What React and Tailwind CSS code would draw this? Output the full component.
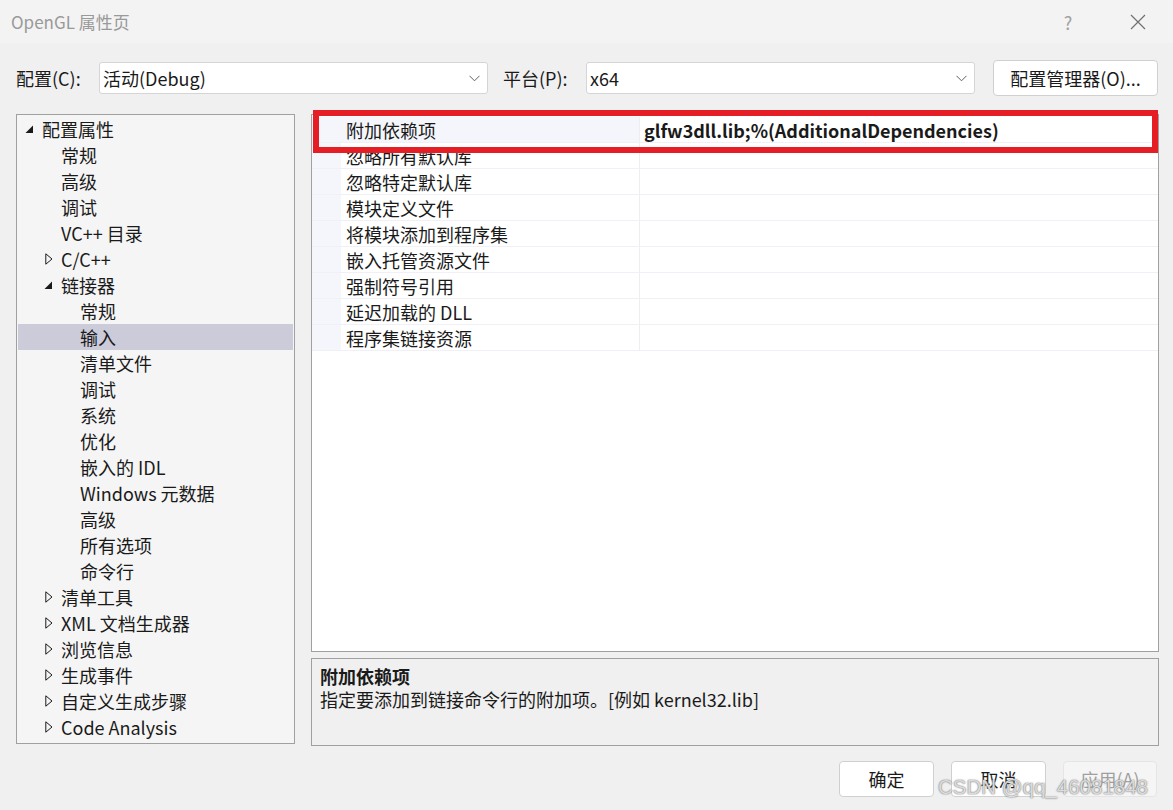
import React from "react";

const tree = [
  { label: "配置属性", level: 0, icon: "open" },
  { label: "常规", level: 1 },
  { label: "高级", level: 1 },
  { label: "调试", level: 1 },
  { label: "VC++ 目录", level: 1 },
  { label: "C/C++", level: 1, icon: "closed" },
  { label: "链接器", level: 1, icon: "open" },
  { label: "常规", level: 2 },
  { label: "输入", level: 2, selected: true },
  { label: "清单文件", level: 2 },
  { label: "调试", level: 2 },
  { label: "系统", level: 2 },
  { label: "优化", level: 2 },
  { label: "嵌入的 IDL", level: 2 },
  { label: "Windows 元数据", level: 2 },
  { label: "高级", level: 2 },
  { label: "所有选项", level: 2 },
  { label: "命令行", level: 2 },
  { label: "清单工具", level: 1, icon: "closed" },
  { label: "XML 文档生成器", level: 1, icon: "closed" },
  { label: "浏览信息", level: 1, icon: "closed" },
  { label: "生成事件", level: 1, icon: "closed" },
  { label: "自定义生成步骤", level: 1, icon: "closed" },
  { label: "Code Analysis", level: 1, icon: "closed" },
];

const props = [
  { name: "附加依赖项", value: "glfw3dll.lib;%(AdditionalDependencies)" },
  { name: "忽略所有默认库" },
  { name: "忽略特定默认库" },
  { name: "模块定义文件" },
  { name: "将模块添加到程序集" },
  { name: "嵌入托管资源文件" },
  { name: "强制符号引用" },
  { name: "延迟加载的 DLL" },
  { name: "程序集链接资源" },
];

const Chevron = () => (
  <svg width="11" height="7" viewBox="0 0 11 7" className="shrink-0">
    <polyline points="0.5,0.8 5.5,5.8 10.5,0.8" fill="none" stroke="#606060" strokeWidth="1" />
  </svg>
);

const TreeIcon = ({ type }) => {
  if (type === "open")
    return (
      <svg width="9" height="9" viewBox="0 0 9 9">
        <polygon points="8,0.5 8,8 0.5,8" fill="#1a1a1a" />
      </svg>
    );
  if (type === "closed")
    return (
      <svg width="8" height="12" viewBox="0 0 8 12">
        <polygon points="0.8,0.8 7,6 0.8,11.2" fill="none" stroke="#1a1a1a" strokeWidth="1" />
      </svg>
    );
  return null;
};

const Select = ({ value, width }) => (
  <div
    className={`${width} h-[32px] bg-white border border-[#d5d5d5] rounded-[3px] flex items-center justify-between pl-[3px] pr-[7px]`}
  >
    <span>{value}</span>
    <Chevron />
  </div>
);

export default function App() {
  return (
    <div className="w-[1173px] h-[810px] bg-[#f0f0f0] relative overflow-hidden text-[18px] text-[#1a1a1a] font-['Noto_Sans_CJK_SC',sans-serif] leading-none">
      {/* title bar */}
      <div className="h-[43px] bg-[#f3f3f3] flex items-center justify-between pl-[11px]">
        <span className="text-[17px] text-[#999999]">OpenGL 属性页</span>
        <div className="flex items-center h-full">
          <span className="text-[18px] text-[#a0a0a0] w-[70px] text-center">?</span>
          <div className="w-[70px] flex justify-center">
            <svg width="16" height="16" viewBox="0 0 16 16">
              <path d="M1 1 L15 15 M15 1 L1 15" stroke="#707070" strokeWidth="1.2" />
            </svg>
          </div>
        </div>
      </div>

      {/* config row */}
      <div className="flex items-center mt-[17px] pl-[16px] h-[36px]">
        <span className="w-[83px]">配置(C):</span>
        <Select value="活动(Debug)" width="w-[389px]" />
        <span className="ml-[15px] w-[83px]">平台(P):</span>
        <Select value="x64" width="w-[389px]" />
        <div className="ml-[18px] w-[165px] h-[36px] bg-white border border-[#d0d0d0] rounded-[4px] flex items-center justify-center">
          配置管理器(O)...
        </div>
      </div>

      {/* main area */}
      <div className="flex mt-[18px] pl-[16px] gap-[16px]">
        {/* tree */}
        <div className="w-[279px] h-[630px] border border-[#a0a0a0] bg-[#f5f5f5] pt-[1px] px-[1px]">
          {tree.map((t, i) => (
            <div
              key={i}
              className={`h-[26px] flex items-center ${t.selected ? "bg-[#cbcbd9]" : ""}`}
            >
              <div
                className="flex items-center justify-end shrink-0 w-[10px]"
                style={{ marginLeft: 6 + t.level * 19 }}
              >
                <TreeIcon type={t.icon} />
              </div>
              <span className="ml-[8px] whitespace-nowrap">{t.label}</span>
            </div>
          ))}
        </div>

        {/* right column */}
        <div className="w-[848px] flex flex-col gap-[6px]">
          <div className="h-[538px] border border-[#a0a0a0] bg-white pt-[2px]">
            {props.map((p, i) => (
              <div key={i} className="h-[26px] flex border-b border-[#f0f0f6]">
                <div className="w-[29px] bg-[#f4f6fb] shrink-0" />
                <div
                  className={`w-[299px] shrink-0 flex items-center pl-[5px] border-r border-[#eeeeee] ${i === 0 ? "bg-[#f4f6fb]" : ""}`}
                >
                  {p.name}
                </div>
                <div className="flex-1 flex items-center pl-[4px] font-bold">{p.value}</div>
              </div>
            ))}
          </div>
          <div className="h-[88px] border border-[#a0a0a0] bg-[#f0f0f0] pl-[8px] pt-[6px]">
            <div className="font-bold h-[22px] flex items-center">附加依赖项</div>
            <div className="h-[24px] flex items-center whitespace-nowrap">
              指定要添加到链接命令行的附加项。[例如 kernel32.lib]
            </div>
          </div>
        </div>
      </div>

      {/* buttons */}
      <div className="flex justify-end gap-[17px] pr-[16px] mt-[15px]">
        <div className="w-[95px] h-[36px] bg-white border border-[#d0d0d0] rounded-[4px] flex items-center justify-center">
          确定
        </div>
        <div className="w-[95px] h-[36px] bg-white border border-[#d0d0d0] rounded-[4px] flex items-center justify-center">
          取消
        </div>
        <div className="w-[94px] h-[36px] bg-[#f5f5f5] border border-[#e5e5e5] rounded-[4px] flex items-center justify-center text-[#a0a0a0]">
          应用(A)
        </div>
      </div>

      {/* red annotation box */}
      <div className="absolute left-[313px] top-[110px] w-[845px] h-[43px] border-[6px] border-[#e41e24]" />

      {/* watermark */}
      <div className="absolute left-[938px] top-[777px] whitespace-nowrap text-[20.5px] font-['Liberation_Sans',sans-serif] text-white/75 [text-shadow:0_0_1px_#666,0_0_2px_#999]">
        CSDN @qq_46081848
      </div>
    </div>
  );
}
